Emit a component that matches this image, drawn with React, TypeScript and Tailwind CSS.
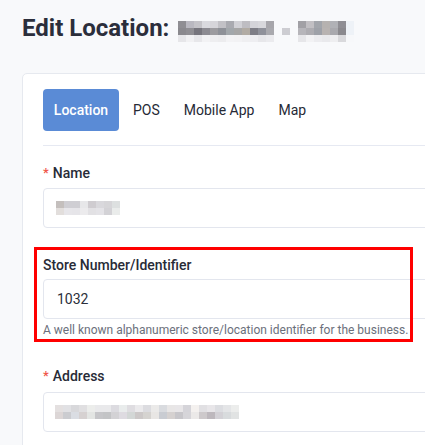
import React from "react";

// masked values are shown as coarse pixel blocks
type Row = string[];

const titleMask: Row[] = [
  ["#8f8e93", "#b9b8c0", "#c4c3c8", "#dadadf", "#d6d5da", "#c2c1c6", "#a9aab0", "#d1d1d6", "#bebdc2", "#d4d4d9", "#d8d8dc", "#a7a6ab"],
  ["#8a898e", "#8f8e93", "#76757d", "#8c8b92", "#9c9b9f", "#8e9198", "#a2a7ab", "#a6a6a6", "#b1aba3", "#7e7e86", "#8f919a", "#a9a9ae"],
  ["#e6e6e9", "#f1f1f3", "#e7e7ea", "#f2f2f4", "#eeeef0", "#ececee", "#f3f3f5", "#f2f2f4", "#efeff1", "#eeeef1", "#e7e7ea", "#ebebee"],
];

const titleMask2: Row[] = [
  ["#a1a0a5", "#c1bfc3", "#a2a5ab", "#b6b2b0", "#b0b1b6", "#8f8e94", "#eef2f7"],
  ["#b6b5ba", "#adacb1", "#9ea1a8", "#b8b3b1", "#a9a9ae", "#8a898e", "#eef2f7"],
  ["#e6e6e9", "#f2f2f4", "#ececef", "#e9e9ec", "#eeeef0", "#d9d9dc", "#f7f8fa"],
];

const nameMask: Row[] = [
  ["#c4bfbd", "#cfced3", "#cfced3", "#e7e7e9", "#cfccd0", "#d9d8dc", "#d6d5d8", "#dde0e0"],
  ["#e2dedc", "#e7e6ea", "#e6e5e9", "#ecebed", "#e2e1e4", "#e4e3e7", "#d3d2d6", "#eaeceb"],
];

const addressMask: Row[] = [
  ["#e4e0e0", "#e1e1e4", "#d8d8db", "#e0dfe1", "#ecedeb", "#e9e9eb", "#e9e9eb", "#dcdbe0", "#e9ecec", "#dfdde1", "#ebeaec", "#dcdce0", "#ebeae9", "#d9dbdf", "#e8e6e6", "#e8e6e8", "#d5d4d9", "#f4f1ef", "#e1e0e3", "#e8e6e9", "#dcdde1", "#e4e5e7", "#ecedec"],
  ["#dcd6d6", "#cbccd0", "#dadde3", "#d6d1d1", "#e3e5e3", "#c6c6c9", "#c3c4c6", "#d3d2d5", "#dedbe1", "#d3d7d6", "#ccc8c8", "#d5d3d0", "#e8e6e4", "#c9ccd2", "#d5d1d0", "#c7c6ca", "#d6d5d9", "#ebe9e8", "#cdc9cb", "#bdb8bd", "#d3d1d6", "#d8dbdd", "#e1e3e3"],
];

function Mask({ rows, cell = 8 }: { rows: Row[]; cell?: number }) {
  return (
    <div className="flex flex-col">
      {rows.map((row, i) => (
        <div key={i} className="flex">
          {row.map((c, j) => (
            <div key={j} style={{ width: cell, height: cell - 1, background: c }} />
          ))}
        </div>
      ))}
    </div>
  );
}

function Label({ text, required }: { text: string; required?: boolean }) {
  return (
    <div className="flex items-center h-5 text-[14px] font-medium text-[#282b37]">
      {required && <span className="text-[#f0564a] mr-[4px] text-[13px]">*</span>}
      {text}
    </div>
  );
}

const tabs = ["Location", "POS", "Mobile App", "Map"];

export default function App() {
  return (
    <div
      className="w-[425px] h-[445px] overflow-hidden bg-[#f8f9fb] pl-[22px] pt-[14px]"
      style={{ fontFamily: "Roboto, 'Liberation Sans', sans-serif" }}
    >
      <div className="flex items-center gap-[9px] h-[28px]">
        <h1 className="text-[24px] font-bold text-[#2b2e3b] leading-none">
          Edit Location:
        </h1>
        <div className="flex items-start gap-[8px] mt-[7px]">
          <Mask rows={titleMask} />
          <div className="w-[8px] h-[7px] bg-[#cdcdd2] mt-[7px]" />
          <Mask rows={titleMask2} />
        </div>
      </div>

      <div className="mt-[31px] w-[520px] bg-white border border-[#e6e9ef] rounded-[5px] pl-[20px] pt-[15px] pb-10">
        <div className="flex items-center pb-[14px] border-b border-[#e6e9f2]">
          {tabs.map((t, i) => (
            <button
              key={t}
              className={
                i === 0
                  ? "h-[42px] w-[76px] mr-[2px] rounded-[4px] bg-[#5a8bd6] text-white text-[14px] font-medium"
                  : "h-[42px] px-3 text-[14px] text-[#262a36]"
              }
            >
              {t}
            </button>
          ))}
        </div>

        <div className="pt-[17px] flex flex-col">
          <Label text="Name" required />
          <div className="mt-[5px] h-[40px] w-[470px] border border-[#e3e6ee] rounded-[4px] flex items-center pl-[12px]">
            <Mask rows={nameMask} />
          </div>

          <div className="relative mt-[27px]">
            <div className="absolute -left-[9px] -top-[8px] w-[379px] h-[95px] border-[3px] border-[#ff0000] pointer-events-none" />
            <Label text="Store Number/Identifier" />
            <div className="mt-[4px] h-[40px] w-[470px] border border-[#e3e6ee] rounded-[4px] flex items-center pl-[13px] text-[14px] text-[#2c2f3b]">
              1032
            </div>
            <p className="mt-[2px] text-[12px] leading-[18px] text-[#6b6f7b]">
              A well known alphanumeric store/location identifier for the business.
            </p>
          </div>

          <div className="mt-[27px]">
            <Label text="Address" required />
            <div className="mt-[6px] h-[40px] w-[470px] border border-[#e3e6ee] rounded-[4px] flex items-center pl-[11px]">
              <Mask rows={addressMask} />
            </div>
          </div>
        </div>
      </div>
    </div>
  );
}
